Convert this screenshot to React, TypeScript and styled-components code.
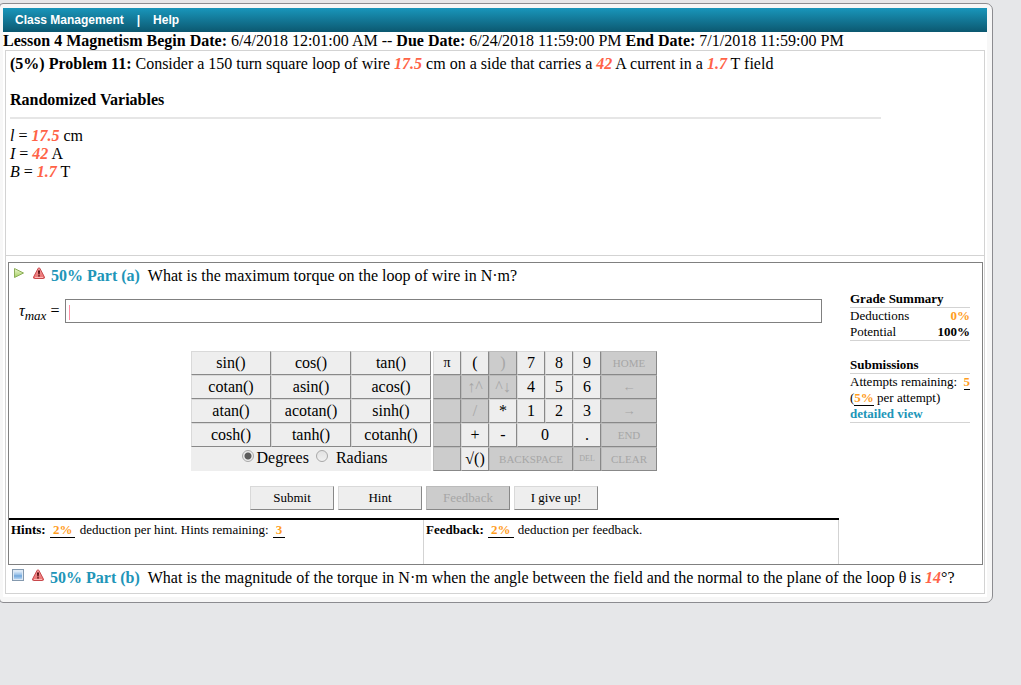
import React from "react";
import styled, { createGlobalStyle, css } from "styled-components";

const serif = '"Liberation Serif", "Times New Roman", Times, serif';
const sans = '"Liberation Sans", Arial, sans-serif';

const GlobalStyle = createGlobalStyle`
  *, *::before, *::after { box-sizing: border-box; }
  body {
    margin: 0;
    background: #e6e7e9;
    color: #000;
    font: 16px/18px ${serif};
  }
`;

const Shell = styled.main`
  margin: 3px 28px 0 -1px;
  padding: 4px 5px 5px 3px;
  background: #f7f7f7;
  border: 1px solid #8c8c90;
  border-radius: 4px 7px 7px 4px;
`;

const Content = styled.div`
  background: #fff;
  padding-bottom: 3px;
`;

const MenuBar = styled.nav`
  display: flex;
  align-items: center;
  gap: 13px;
  height: 24px;
  padding: 0 12px;
  background: linear-gradient(#1996bb, #0c5870);
  color: #fff;
  font: bold 12px/16px ${sans};
`;

const MenuLink = styled.a`
  color: inherit;
  text-decoration: none;
`;

const Dates = styled.div`
  min-height: 18px;
`;

const Assignment = styled.div`
  margin: 0 2px;
  border: 1px solid #d3d3d3;
`;

const Problem = styled.section`
  min-height: 205px;
  padding: 4px;
  border-bottom: 1px solid #d3d3d3;
`;

const Statement = styled.p`
  margin: 0 0 18px;
`;

const Heading = styled.h2`
  margin: 0;
  font-size: 16px;
  line-height: 18px;
`;

const Rule = styled.hr`
  height: 2px;
  margin: 8px 99px 8px 0;
  border: 0;
  background: #e6e6e6;
`;

const Value = styled.em`
  color: #ff6347;
  font-weight: bold;
`;

const Part = styled.section`
  display: flex;
  gap: 11px;
  margin: 6px 1px 0 2px;
  padding-right: 12px;
  border: 1px solid #808080;
`;

const Work = styled.div`
  flex: 1;
  min-width: 0;
  display: flex;
  flex-direction: column;
`;

const PartTitle = styled.div<{ $closed?: boolean }>`
  display: flex;
  align-items: flex-start;
  padding: ${(p) => (p.$closed ? "4px 6px 6px" : "4px 4px 0")};
  svg {
    flex: none;
    margin-right: 6px;
  }
`;

const PartName = styled.b`
  flex: none;
  color: #2095b8;
  margin-right: 8px;
`;

const AnswerRow = styled.div`
  display: flex;
  align-items: center;
  gap: 6px;
  margin-top: 14px;
  padding: 0 17px 0 10px;
`;

const AnswerLabel = styled.label`
  font-size: 16px;
  line-height: 24px;
  sub {
    font-size: 13px;
    line-height: 0;
  }
`;

const Field = styled.div`
  position: relative;
  flex: 1;
  display: flex;
`;

const Answer = styled.input`
  flex: 1;
  min-width: 0;
  height: 24px;
  padding: 0 4px;
  border: 1px solid #808080;
  background: #fff;
  font: 16px/18px ${serif};
  outline: 0;
`;

const Caret = styled.span`
  position: absolute;
  left: 4px;
  top: 6px;
  width: 1px;
  height: 15px;
  background: #ff8fa5;
`;

const Calculator = styled.div`
  display: flex;
  justify-content: center;
  gap: 2px;
  margin-top: 28px;
`;

const Functions = styled.div`
  display: grid;
  grid-template-columns: repeat(3, 80px);
  grid-auto-rows: 24px;
  background: #eee;
`;

const Keypad = styled.div`
  display: grid;
  grid-template-columns: repeat(6, 28px) 56px;
  grid-auto-rows: 24px;
`;

const raised = css`
  padding: 0;
  border: 1px solid;
  border-color: #d9d9d9 #888 #888 #d9d9d9;
  background: #eee;
  color: #000;
  &:disabled {
    background: #ccc;
    border-color: #bbb #888 #888 #bbb;
    color: #a6a6a6;
  }
`;

const Key = styled.button<{ $span?: number; $size?: number }>`
  ${raised}
  grid-column: span ${(p) => p.$span ?? 1};
  font: ${(p) => p.$size ?? 16}px/18px ${serif};
  white-space: nowrap;
`;

const Units = styled.div`
  grid-column: 1 / -1;
  display: flex;
  justify-content: center;
  gap: 8px;
  padding-left: 10px;
`;

const Unit = styled.label<{ $gap: number }>`
  display: flex;
  align-items: flex-start;
  gap: ${(p) => p.$gap}px;
  padding: 2px 1px 0 0;
  margin-left: -2px;
`;

const Radio = styled.input`
  appearance: none;
  width: 12px;
  height: 12px;
  margin: 1px 0;
  border: 1px solid #a8a8a8;
  border-radius: 50%;
  background: linear-gradient(#e2e2e2, #f0f0f0);
  &:checked {
    background: radial-gradient(circle, #5c5c5c 0 3px, #ececec 4px);
  }
`;

const Actions = styled.div`
  display: flex;
  justify-content: center;
  gap: 4px;
  margin: 15px 0 8px;
`;

const Action = styled.button`
  ${raised}
  width: 84px;
  height: 24px;
  font: 13px/16px ${serif};
`;

const Notes = styled.div`
  display: grid;
  grid-template-columns: 1fr 1fr;
  min-height: 46px;
  border-top: 2px solid #000;
  font-size: 13px;
  line-height: 16px;
`;

const Note = styled.div`
  padding: 2px;
  border-right: 1px solid #d3d3d3;
`;

const Amount = styled.b<{ $pad?: number }>`
  color: #ff9d1e;
  margin-right: ${(p) => (p.$pad ? 1 : 0)}px;
  margin-left: ${(p) => (p.$pad ? 1 : 0)}px;
  padding: 0 ${(p) => p.$pad ?? 0}px;
  border-bottom: 1px solid #000;
`;

const Summary = styled.aside`
  flex: none;
  width: 120px;
  padding-top: 28px;
  font-size: 13px;
  line-height: 16px;
`;

const SummaryTitle = styled.h3`
  margin: 0;
  font-size: 13px;
  line-height: 16px;
`;

const SummaryBody = styled.div`
  margin-bottom: 16px;
  border: solid #d3d3d3;
  border-width: 1px 0;
`;

const SummaryLine = styled.div`
  display: flex;
  justify-content: space-between;
  white-space: nowrap;
`;

const Score = styled.b<{ $lost?: boolean }>`
  color: ${(p) => (p.$lost ? "#ff9d1e" : "#000")};
`;

const Detail = styled.a`
  display: block;
  color: #2095b8;
  font-weight: bold;
  text-decoration: none;
`;

const PlayIcon = () => (
  <svg width="14" height="13" viewBox="0 0 14 13" aria-hidden="true">
    <defs>
      <linearGradient id="play" x1="0" y1="0" x2="0" y2="1">
        <stop offset="0" stopColor="#eef8d0" />
        <stop offset="1" stopColor="#a4cf60" />
      </linearGradient>
    </defs>
    <path d="M1.5 1.5 L10.5 6 L1.5 10.5 Z" fill="url(#play)" stroke="#8cae5a" strokeLinejoin="round" />
  </svg>
);

const StopIcon = () => (
  <svg width="14" height="13" viewBox="0 0 14 13" aria-hidden="true">
    <defs>
      <linearGradient id="stop" x1="0" y1="0" x2="0" y2="1">
        <stop offset="0" stopColor="#e2eefa" />
        <stop offset="0.5" stopColor="#92bde6" />
        <stop offset="0.6" stopColor="#6ea5db" />
        <stop offset="1" stopColor="#b5d4f1" />
      </linearGradient>
    </defs>
    <rect x="0.5" y="0.5" width="11" height="11" fill="#dfeaf5" stroke="#8499ae" />
    <rect x="2" y="2" width="8" height="8" fill="url(#stop)" />
  </svg>
);

const AlertIcon = ({ id }: { id: string }) => (
  <svg width="12" height="13" viewBox="0 0 12 13" aria-hidden="true">
    <defs>
      <linearGradient id={id} x1="0" y1="0" x2="0" y2="1">
        <stop offset="0" stopColor="#f7a0a0" />
        <stop offset="1" stopColor="#e86a6a" />
      </linearGradient>
    </defs>
    <path
      d="M6 0.8 Q6.7 0.8 7.1 1.8 L11.3 9.8 Q12 11.5 10.6 11.5 H1.4 Q0 11.5 0.7 9.8 L4.9 1.8 Q5.3 0.8 6 0.8 Z"
      fill={`url(#${id})`}
      stroke="#c8484c"
    />
    <path d="M2 10.4 H10" stroke="#ffc3c0" />
    <path d="M5 3.5 H7 L6.6 7.5 H5.4 Z M5.2 8.3 H6.8 V9.6 H5.2 Z" fill="#4c0508" />
  </svg>
);

const functionNames = [
  "sin()", "cos()", "tan()",
  "cotan()", "asin()", "acos()",
  "atan()", "acotan()", "sinh()",
  "cosh()", "tanh()", "cotanh()",
];

type KeyDef = { label: string; off?: boolean; span?: number; size?: number };

const keys: KeyDef[] = [
  { label: "π", size: 14 }, { label: "(" }, { label: ")", off: true },
  { label: "7" }, { label: "8" }, { label: "9" }, { label: "HOME", off: true, size: 11 },
  { label: "", off: true }, { label: "↑^", off: true }, { label: "^↓", off: true },
  { label: "4" }, { label: "5" }, { label: "6" }, { label: "←", off: true, size: 13 },
  { label: "", off: true }, { label: "/", off: true }, { label: "*" },
  { label: "1" }, { label: "2" }, { label: "3" }, { label: "→", off: true, size: 13 },
  { label: "", off: true }, { label: "+" }, { label: "-" },
  { label: "0", span: 2 }, { label: "." }, { label: "END", off: true, size: 11 },
  { label: "", off: true }, { label: "√()" }, { label: "BACKSPACE", off: true, span: 3, size: 11 },
  { label: "DEL", off: true, size: 8 }, { label: "CLEAR", off: true, size: 11 },
];

export default function App() {
  return (
    <>
      <GlobalStyle />
      <Shell>
        <Content>
          <MenuBar>
            <MenuLink href="#class">Class Management</MenuLink>
            <span>|</span>
            <MenuLink href="#help">Help</MenuLink>
          </MenuBar>
          <Dates>
            <b>Lesson 4 Magnetism</b> <b>Begin Date:</b> 6/4/2018 12:01:00 AM -- <b>Due Date:</b> 6/24/2018
            11:59:00 PM <b>End Date:</b> 7/1/2018 11:59:00 PM
          </Dates>
          <Assignment>
            <Problem>
              <Statement>
                <b>(5%) Problem 11:</b> Consider a 150 turn square loop of wire <Value>17.5</Value> cm on a side
                that carries a <Value>42</Value> A current in a <Value>1.7</Value> T field
              </Statement>
              <Heading>Randomized Variables</Heading>
              <Rule />
              <div><i>l</i> = <Value>17.5</Value> cm</div>
              <div><i>I</i> = <Value>42</Value> A</div>
              <div><i>B</i> = <Value>1.7</Value> T</div>
            </Problem>

            <Part>
              <Work>
                <PartTitle>
                  <PlayIcon />
                  <AlertIcon id="alert-a" />
                  <PartName>50% Part (a)</PartName>
                  <span>What is the maximum torque on the loop of wire in N·m?</span>
                </PartTitle>
                <AnswerRow>
                  <AnswerLabel htmlFor="torque">
                    <i>τ<sub>max</sub></i> =
                  </AnswerLabel>
                  <Field>
                    <Answer id="torque" type="text" />
                    <Caret />
                  </Field>
                </AnswerRow>
                <Calculator>
                  <Functions>
                    {functionNames.map((name) => (
                      <Key key={name} type="button">{name}</Key>
                    ))}
                    <Units>
                      <Unit $gap={3}>
                        <Radio type="radio" name="unit" defaultChecked />
                        Degrees
                      </Unit>
                      <Unit $gap={8}>
                        <Radio type="radio" name="unit" />
                        Radians
                      </Unit>
                    </Units>
                  </Functions>
                  <Keypad>
                    {keys.map((k, i) => (
                      <Key key={i} type="button" disabled={k.off} $span={k.span} $size={k.size}>
                        {k.label}
                      </Key>
                    ))}
                  </Keypad>
                </Calculator>
                <Actions>
                  <Action type="button">Submit</Action>
                  <Action type="button">Hint</Action>
                  <Action type="button" disabled>Feedback</Action>
                  <Action type="button">I give up!</Action>
                </Actions>
                <Notes>
                  <Note>
                    <b>Hints:</b> <Amount $pad={3}>2%</Amount> deduction per hint. Hints remaining:{" "}
                    <Amount $pad={3}>3</Amount>
                  </Note>
                  <Note>
                    <b>Feedback:</b> <Amount $pad={3}>2%</Amount> deduction per feedback.
                  </Note>
                </Notes>
              </Work>
              <Summary>
                <SummaryTitle>Grade Summary</SummaryTitle>
                <SummaryBody>
                  <SummaryLine>Deductions <Score $lost>0%</Score></SummaryLine>
                  <SummaryLine>Potential <Score>100%</Score></SummaryLine>
                </SummaryBody>
                <SummaryTitle>Submissions</SummaryTitle>
                <SummaryBody>
                  <SummaryLine>Attempts remaining: <span><Amount>5</Amount></span></SummaryLine>
                  <div>(<Amount>5%</Amount> per attempt)</div>
                  <Detail href="#detail">detailed view</Detail>
                </SummaryBody>
              </Summary>
            </Part>

            <PartTitle $closed>
              <StopIcon />
              <AlertIcon id="alert-b" />
              <PartName>50% Part (b)</PartName>
              <span>
                What is the magnitude of the torque in N·m when the angle between the field and the normal to
                the plane of the loop θ is <Value>14</Value>°?
              </span>
            </PartTitle>
          </Assignment>
        </Content>
      </Shell>
    </>
  );
}
